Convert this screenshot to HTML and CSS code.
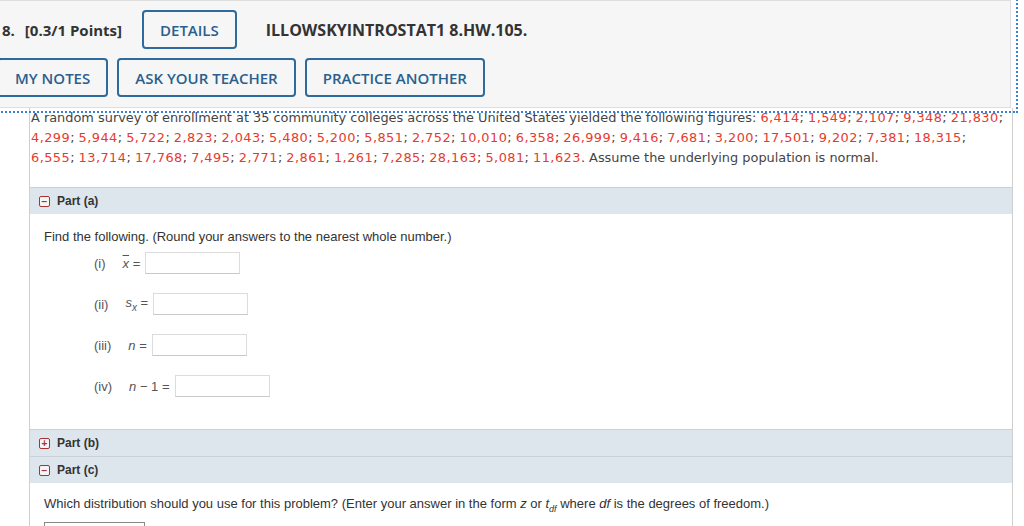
FILE: index.html
```html
<!DOCTYPE html>
<html lang="en">
<head>
    <meta charset="UTF-8">
    <title>Question 8</title>
    <link rel="stylesheet" href="styles.css">
</head>
<body>

    <div class="question">
        <div class="q-head">
            <div class="head-row">
                <span class="q-num">8.</span>
                <span class="q-points">[0.3/1 Points]</span>
                <button class="q-btn">DETAILS</button>
                <span class="q-code">ILLOWSKYINTROSTAT1 8.HW.105.</span>
            </div>
            <div class="head-row second">
                <button class="q-btn first">MY NOTES</button>
                <button class="q-btn">ASK YOUR TEACHER</button>
                <button class="q-btn">PRACTICE ANOTHER</button>
            </div>
        </div>

        <div class="q-body">
            <p class="prompt">A random survey of enrollment at 35 community colleges across the United States yielded the following figures: <span class="red">6,414</span>; <span class="red">1,549</span>; <span class="red">2,107</span>; <span class="red">9,348</span>; <span class="red">21,830</span>; <span class="red">4,299</span>; <span class="red">5,944</span>; <span class="red">5,722</span>; <span class="red">2,823</span>; <span class="red">2,043</span>; <span class="red">5,480</span>; <span class="red">5,200</span>; <span class="red">5,851</span>; <span class="red">2,752</span>; <span class="red">10,010</span>; <span class="red">6,358</span>; <span class="red">26,999</span>; <span class="red">9,416</span>; <span class="red">7,681</span>; <span class="red">3,200</span>; <span class="red">17,501</span>; <span class="red">9,202</span>; <span class="red">7,381</span>; <span class="red">18,315</span>; <span class="red">6,555</span>; <span class="red">13,714</span>; <span class="red">17,768</span>; <span class="red">7,495</span>; <span class="red">2,771</span>; <span class="red">2,861</span>; <span class="red">1,261</span>; <span class="red">7,285</span>; <span class="red">28,163</span>; <span class="red">5,081</span>; <span class="red">11,623</span>. Assume the underlying population is normal.</p>

            <div class="part-bar"><span class="toggle">&minus;</span>Part (a)</div>
            <div class="part-body">
                <p class="part-text">Find the following. (Round your answers to the nearest whole number.)</p>
                <div class="ans-list">
                    <div class="ans-row">
                        <span class="roman">(i)</span>
                        <span class="math"><i class="xbar">x</i> =</span>
                        <span class="ans-box"></span>
                    </div>
                    <div class="ans-row">
                        <span class="roman">(ii)</span>
                        <span class="math"><i>s</i><sub><i>x</i></sub> =</span>
                        <span class="ans-box"></span>
                    </div>
                    <div class="ans-row">
                        <span class="roman">(iii)</span>
                        <span class="math"><i>n</i> =</span>
                        <span class="ans-box"></span>
                    </div>
                    <div class="ans-row">
                        <span class="roman">(iv)</span>
                        <span class="math"><i>n</i> &minus; 1 =</span>
                        <span class="ans-box"></span>
                    </div>
                </div>
            </div>

            <div class="part-bar"><span class="toggle">+</span>Part (b)</div>
            <div class="part-bar"><span class="toggle">&minus;</span>Part (c)</div>
            <div class="part-body last">
                <p class="part-text">Which distribution should you use for this problem? (Enter your answer in the form <i>z</i> or <i>t</i><sub><i>df</i></sub> where <i>df</i> is the degrees of freedom.)</p>
                <span class="ans-box wide"></span>
            </div>
        </div>

        <div class="focus-ring"></div>
    </div>

</body>
</html>
```

FILE: styles.css
```css
body {
    margin: 0;
    background: #ffffff;
    font-family: "Liberation Sans", Arial, sans-serif;
    color: #333;
    overflow: hidden;
}
.question {
    position: relative;
    width: 1024px;
}
.q-head {
    width: 1010px;
    height: 106px;
    background: #f6f6f6;
    border-top: 1px solid #dedede;
    border-right: 1px solid #dedede;
    border-bottom: 1px solid #dedede;
    font-family: "Open Sans", sans-serif;
}
.head-row {
    display: flex;
    align-items: center;
    padding-top: 9px;
    padding-left: 2px;
}
.head-row.second {
    padding-top: 9px;
    padding-left: 0;
}
.q-num {
    font-size: 15px;
    font-weight: 700;
    color: #333;
    margin-right: 10px;
}
.q-points {
    font-size: 15px;
    font-weight: 700;
    color: #333;
    margin-right: 20px;
}
.q-code {
    font-size: 16px;
    font-weight: 700;
    color: #333;
    margin-left: 20px;
}
.q-btn {
    font-family: "Open Sans", sans-serif;
    font-size: 15px;
    font-weight: 600;
    color: #2a5f8f;
    background: transparent;
    border: 2px solid #2e6a9c;
    border-radius: 4px;
    height: 39px;
    padding: 0 16px;
    margin-right: 9px;
    cursor: pointer;
}
.q-btn.first {
    margin-left: -3px;
}
.q-body {
    margin-left: 29px;
    width: 982px;
    border-left: 1px solid #cfcfcf;
    border-right: 1px solid #cfcfcf;
}
.prompt {
    margin: 0;
    padding: 0 0 19px 1px;
    font-family: "DejaVu Sans", Verdana, sans-serif;
    font-size: 12.9px;
    line-height: 20px;
    color: #444;
}
.red {
    color: #e53b2f;
    letter-spacing: 0.45px;
}
.part-bar {
    display: flex;
    align-items: center;
    height: 26px;
    background: #dde5ed;
    border-top: 1px solid #c9d0d8;
    padding-left: 9px;
    font-size: 12px;
    font-weight: bold;
    color: #333;
}
.toggle {
    width: 9px;
    height: 9px;
    border: 1px solid #a83232;
    border-radius: 2px;
    background: #f4f4f4;
    color: #a83232;
    font-size: 10px;
    line-height: 9px;
    text-align: center;
    margin-right: 7px;
}
.part-body {
    background: #fff;
    padding: 14px 14px 32px 14px;
}
.part-body.last {
    padding: 12px 14px 10px 14px;
}
.part-text {
    margin: 0;
    font-size: 13px;
    line-height: 18px;
    color: #333;
}
.part-text sub {
    font-size: 9px;
}
.ans-list {
    display: flex;
    flex-direction: column;
    gap: 19px;
    margin-top: 6px;
}
.ans-row {
    display: flex;
    align-items: center;
    height: 22px;
    padding-left: 50px;
    font-size: 13px;
    color: #555;
}
.roman {
    margin-right: 17px;
}
.math {
    margin-right: 5px;
}
.math sub {
    font-size: 10px;
}
.xbar {
    text-decoration: overline;
}
.ans-box {
    display: inline-block;
    width: 93px;
    height: 20px;
    border: 1px solid #dcdcdc;
    border-bottom-color: #c8c8c8;
    background: #fff;
}
.ans-box.wide {
    width: 99px;
    margin-top: 4px;
    border-color: #888;
}
.focus-ring {
    position: absolute;
    top: -10px;
    left: -10px;
    width: 1026px;
    height: 121px;
    border-right: 2px dotted #3b7fd6;
    border-bottom: 2px dotted #3b7fd6;
    pointer-events: none;
}
```
